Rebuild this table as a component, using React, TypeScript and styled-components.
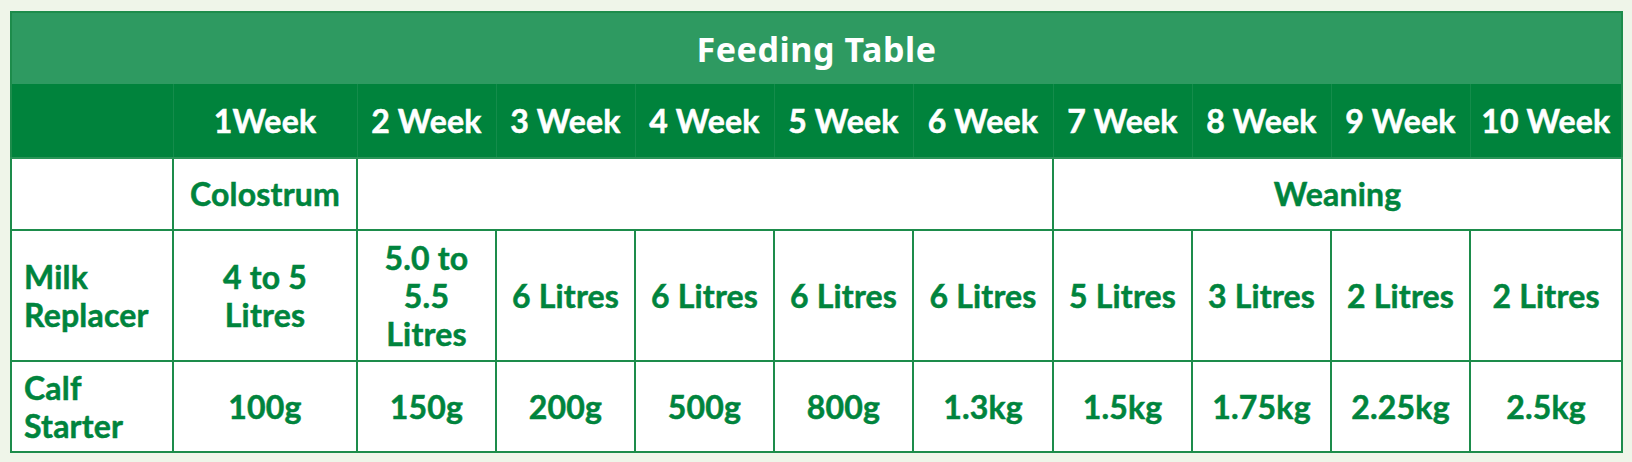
import React from 'react'
import styled, { createGlobalStyle } from 'styled-components'

const GlobalStyle = createGlobalStyle`
  html, body {
    margin: 0;
    padding: 0;
    background: #eff5e9;
  }
  body {
    padding: 11px 0 0 10px;
    font-family: Lato, 'Open Sans', 'Liberation Sans', sans-serif;
  }
`

const Table = styled.table`
  width: 1611px;
  table-layout: fixed;
  border-collapse: collapse;
  border: 2px solid #1d8c4b;
  background: #fff;
  font-weight: 700;
  font-size: 32px;
  line-height: 38px;
  letter-spacing: 0.2px;
  color: #00843d;
  -webkit-text-stroke: 0.5px currentColor;
`

const TitleCell = styled.th`
  height: 71px;
  padding: 0;
  background: #2e9a61;
  color: #fff;
  font-family: 'Noto Sans', 'Open Sans', sans-serif;
  font-size: 34px;
  font-weight: 700;
  letter-spacing: 0.6px;
  text-align: center;
  vertical-align: middle;
  border: none;
  -webkit-text-stroke: 0;
`

const HeadCell = styled.th`
  height: 73px;
  padding: 0;
  background: #00833c;
  color: #fff;
  font-weight: 700;
  text-align: center;
  vertical-align: middle;
  border-left: 1px solid rgba(255, 255, 255, 0.08);
  border-right: 1px solid rgba(255, 255, 255, 0.08);
  border-top: none;
  border-bottom: 2px solid #2a9457;
`

const Row = styled.tr<{ $h: number }>`
  height: ${p => p.$h}px;
`

const Cell = styled.td`
  padding: 0 4px;
  border: 2px solid #1d8c4b;
  text-align: center;
  vertical-align: middle;
`

const LabelCell = styled(Cell)`
  text-align: left;
  padding-left: 12px;
`

const widths = [162, 184, 139, 139, 139, 139, 140, 139, 139, 139, 152]
const weeks = ['1Week', '2 Week', '3 Week', '4 Week', '5 Week', '6 Week', '7 Week', '8 Week', '9 Week', '10 Week']
const milk = [
  <>4 to 5<br />Litres</>,
  <>5.0 to<br />5.5<br />Litres</>,
  '6 Litres', '6 Litres', '6 Litres', '6 Litres', '5 Litres', '3 Litres', '2 Litres', '2 Litres'
]
const starter = ['100g', '150g', '200g', '500g', '800g', '1.3kg', '1.5kg', '1.75kg', '2.25kg', '2.5kg']

export default function App() {
  return (
    <>
      <GlobalStyle />
      <Table>
        <colgroup>
          {widths.map((w, i) => <col key={i} style={{ width: w }} />)}
        </colgroup>
        <thead>
          <tr>
            <TitleCell colSpan={11}>Feeding Table</TitleCell>
          </tr>
          <tr>
            <HeadCell />
            {weeks.map(w => <HeadCell key={w}>{w}</HeadCell>)}
          </tr>
        </thead>
        <tbody>
          <Row $h={72}>
            <Cell />
            <Cell>Colostrum</Cell>
            <Cell colSpan={5} />
            <Cell colSpan={4}>Weaning</Cell>
          </Row>
          <Row $h={131}>
            <LabelCell>Milk<br />Replacer</LabelCell>
            {milk.map((m, i) => <Cell key={i}>{m}</Cell>)}
          </Row>
          <Row $h={91}>
            <LabelCell>Calf<br />Starter</LabelCell>
            {starter.map(s => <Cell key={s}>{s}</Cell>)}
          </Row>
        </tbody>
      </Table>
    </>
  )
}
